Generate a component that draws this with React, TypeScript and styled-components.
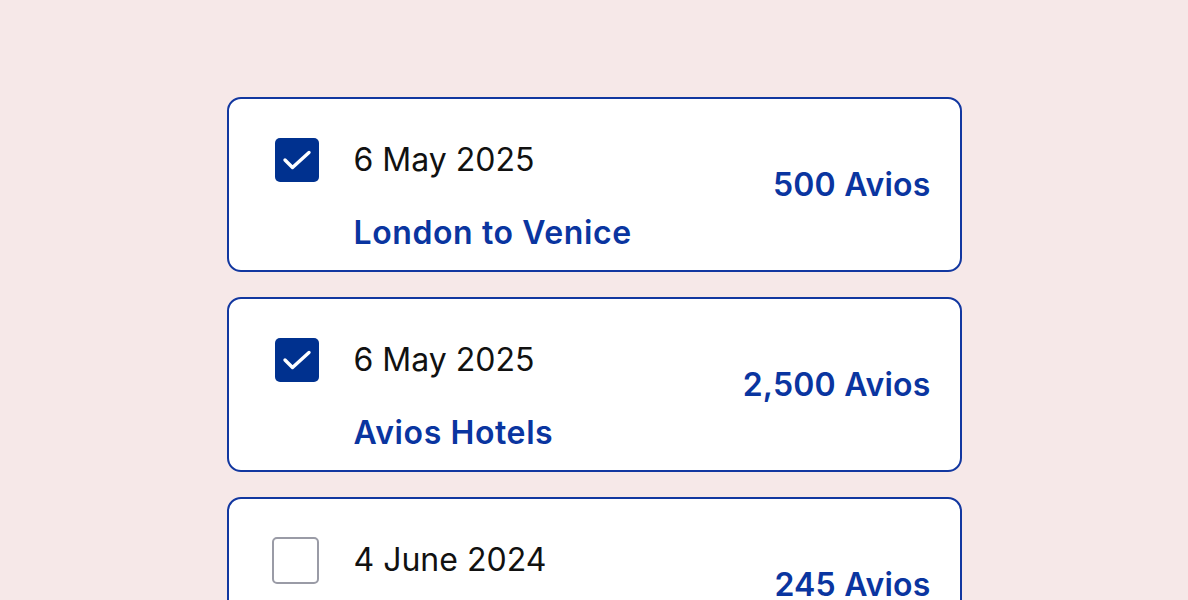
import styled, { createGlobalStyle } from "styled-components";

const GlobalStyle = createGlobalStyle`
  html, body {
    margin: 0;
    padding: 0;
    background: #f6e8e8;
    font-family: Inter, "Noto Sans", sans-serif;
  }
`;

const Page = styled.div`
  min-height: 600px;
  padding-top: 97px;
  display: flex;
  flex-direction: column;
  align-items: center;
  gap: 25px;
`;

const Card = styled.label`
  box-sizing: border-box;
  width: 735px;
  height: 175px;
  background: #ffffff;
  border: 2px solid #1237a0;
  border-radius: 14px;
  padding: 0 29px 0 43px;
  display: flex;
  align-items: center;
  cursor: pointer;
`;

const Left = styled.div`
  align-self: flex-start;
  margin-top: 39px;
  flex: 1;
  display: grid;
  grid-template-columns: 47px 1fr;
  grid-template-rows: 44px 44px;
  column-gap: 35px;
  row-gap: 29px;
  align-items: center;
`;

const Box = styled.span<{ $checked: boolean }>`
  justify-self: end;
  box-sizing: border-box;
  width: ${(p) => (p.$checked ? "44px" : "47px")};
  height: ${(p) => (p.$checked ? "44px" : "47px")};
  border-radius: 5px;
  background: ${(p) => (p.$checked ? "#00318f" : "#ffffff")};
  border: ${(p) => (p.$checked ? "none" : "2px solid #9a9ba6")};
  display: flex;
  align-items: center;
  justify-content: center;
`;

const DateText = styled.div`
  font-size: 32px;
  font-weight: 400;
  color: #111111;
  line-height: 44px;
`;

const Title = styled.div`
  grid-column: 2;
  font-size: 32px;
  font-weight: 600;
  letter-spacing: 0.6px;
  color: #0a35a0;
  line-height: 44px;
`;

const Amount = styled.div`
  font-size: 32px;
  font-weight: 600;
  letter-spacing: 0.2px;
  color: #0a35a0;
  line-height: 44px;
`;

const Check = () => (
  <svg width="30" height="20" viewBox="0 0 30 20" fill="none">
    <path
      d="M3 10 L10.5 17.5 L27 2.5"
      stroke="#ffffff"
      strokeWidth="3.4"
      strokeLinecap="round"
      strokeLinejoin="round"
    />
  </svg>
);

const items = [
  { date: "6 May 2025", title: "London to Venice", amount: "500 Avios", checked: true },
  { date: "6 May 2025", title: "Avios Hotels", amount: "2,500 Avios", checked: true },
  { date: "4 June 2024", title: "Avios Shopping", amount: "245 Avios", checked: false },
];

export default function App() {
  return (
    <>
      <GlobalStyle />
      <Page>
        {items.map((it, i) => (
          <Card key={i}>
            <Left>
              <Box $checked={it.checked}>{it.checked && <Check />}</Box>
              <DateText>{it.date}</DateText>
              <Title>{it.title}</Title>
            </Left>
            <Amount>{it.amount}</Amount>
          </Card>
        ))}
      </Page>
    </>
  );
}
